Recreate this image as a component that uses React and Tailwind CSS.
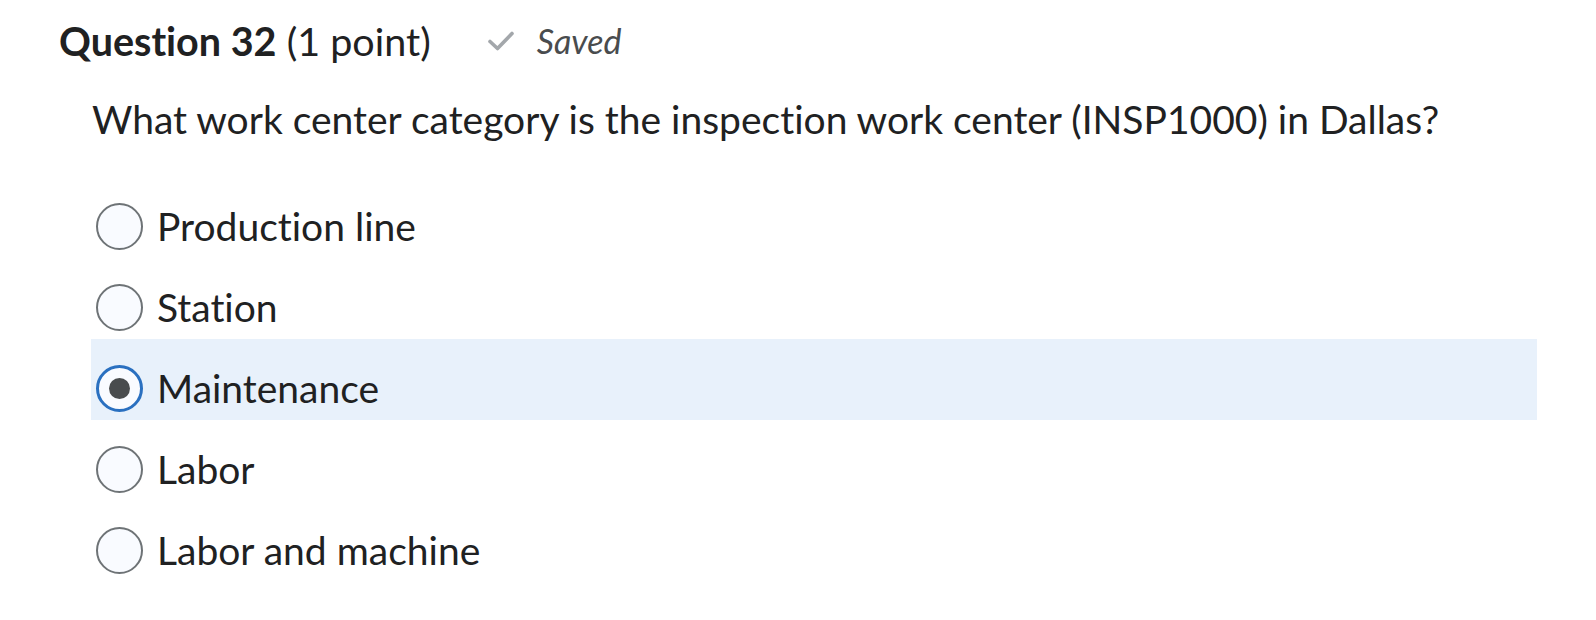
import { useState } from 'react';

const options = ['Production line', 'Station', 'Maintenance', 'Labor', 'Labor and machine'];

const Radio = ({ checked }) => (
  <span
    className={`flex h-[47px] w-[47px] shrink-0 items-center justify-center rounded-full bg-[#f9fbff] ${
      checked ? 'border-[3px] border-[#2a70c0]' : 'border-2 border-[#6e7376]'
    }`}
  >
    {checked && <span className="h-[21px] w-[21px] rounded-full bg-[#494c4e]" />}
  </span>
);

export default function App() {
  const [selected, setSelected] = useState('Maintenance');

  return (
    <div
      className="min-h-[620px] bg-white pl-[59px] pt-[16px] text-[#202122] [font-variant-ligatures:none]"
      style={{ fontFamily: 'Lato, "Open Sans", sans-serif' }}
    >
      <div className="flex h-[50px] items-center">
        <h2 className="text-[39.5px] leading-none">
          <span className="font-bold">Question 32</span> <span>(1 point)</span>
        </h2>
        <span className="ml-[57px] flex items-center gap-[23px] text-[#494c4e]">
          <svg width="26" height="20" viewBox="0 0 26 20" fill="none">
            <path d="M2 10.5l7.5 7L24 2.5" stroke="#a3a7ab" strokeWidth="3.6" strokeLinecap="round" strokeLinejoin="round" />
          </svg>
          <span className="text-[34px] italic leading-none">Saved</span>
        </span>
      </div>

      <div className="ml-[32px] w-[1446px]">
        <p className="mt-[32px] pl-[1px] text-[39px] leading-[42px]">
          What work center category is the inspection work center (INSP1000) in Dallas?
        </p>

        <div className="mt-[37px] flex flex-col">
          {options.map((opt) => {
            const checked = selected === opt;
            return (
              <label
                key={opt}
                onClick={() => setSelected(opt)}
                className={`flex h-[81px] cursor-pointer items-center gap-[14px] pl-[5px] pt-[19px] pb-[1px] ${
                  checked ? 'bg-[#e8f1fb]' : ''
                }`}
              >
                <Radio checked={checked} />
                <span className="text-[39px] leading-none">{opt}</span>
              </label>
            );
          })}
        </div>
      </div>
    </div>
  );
}
